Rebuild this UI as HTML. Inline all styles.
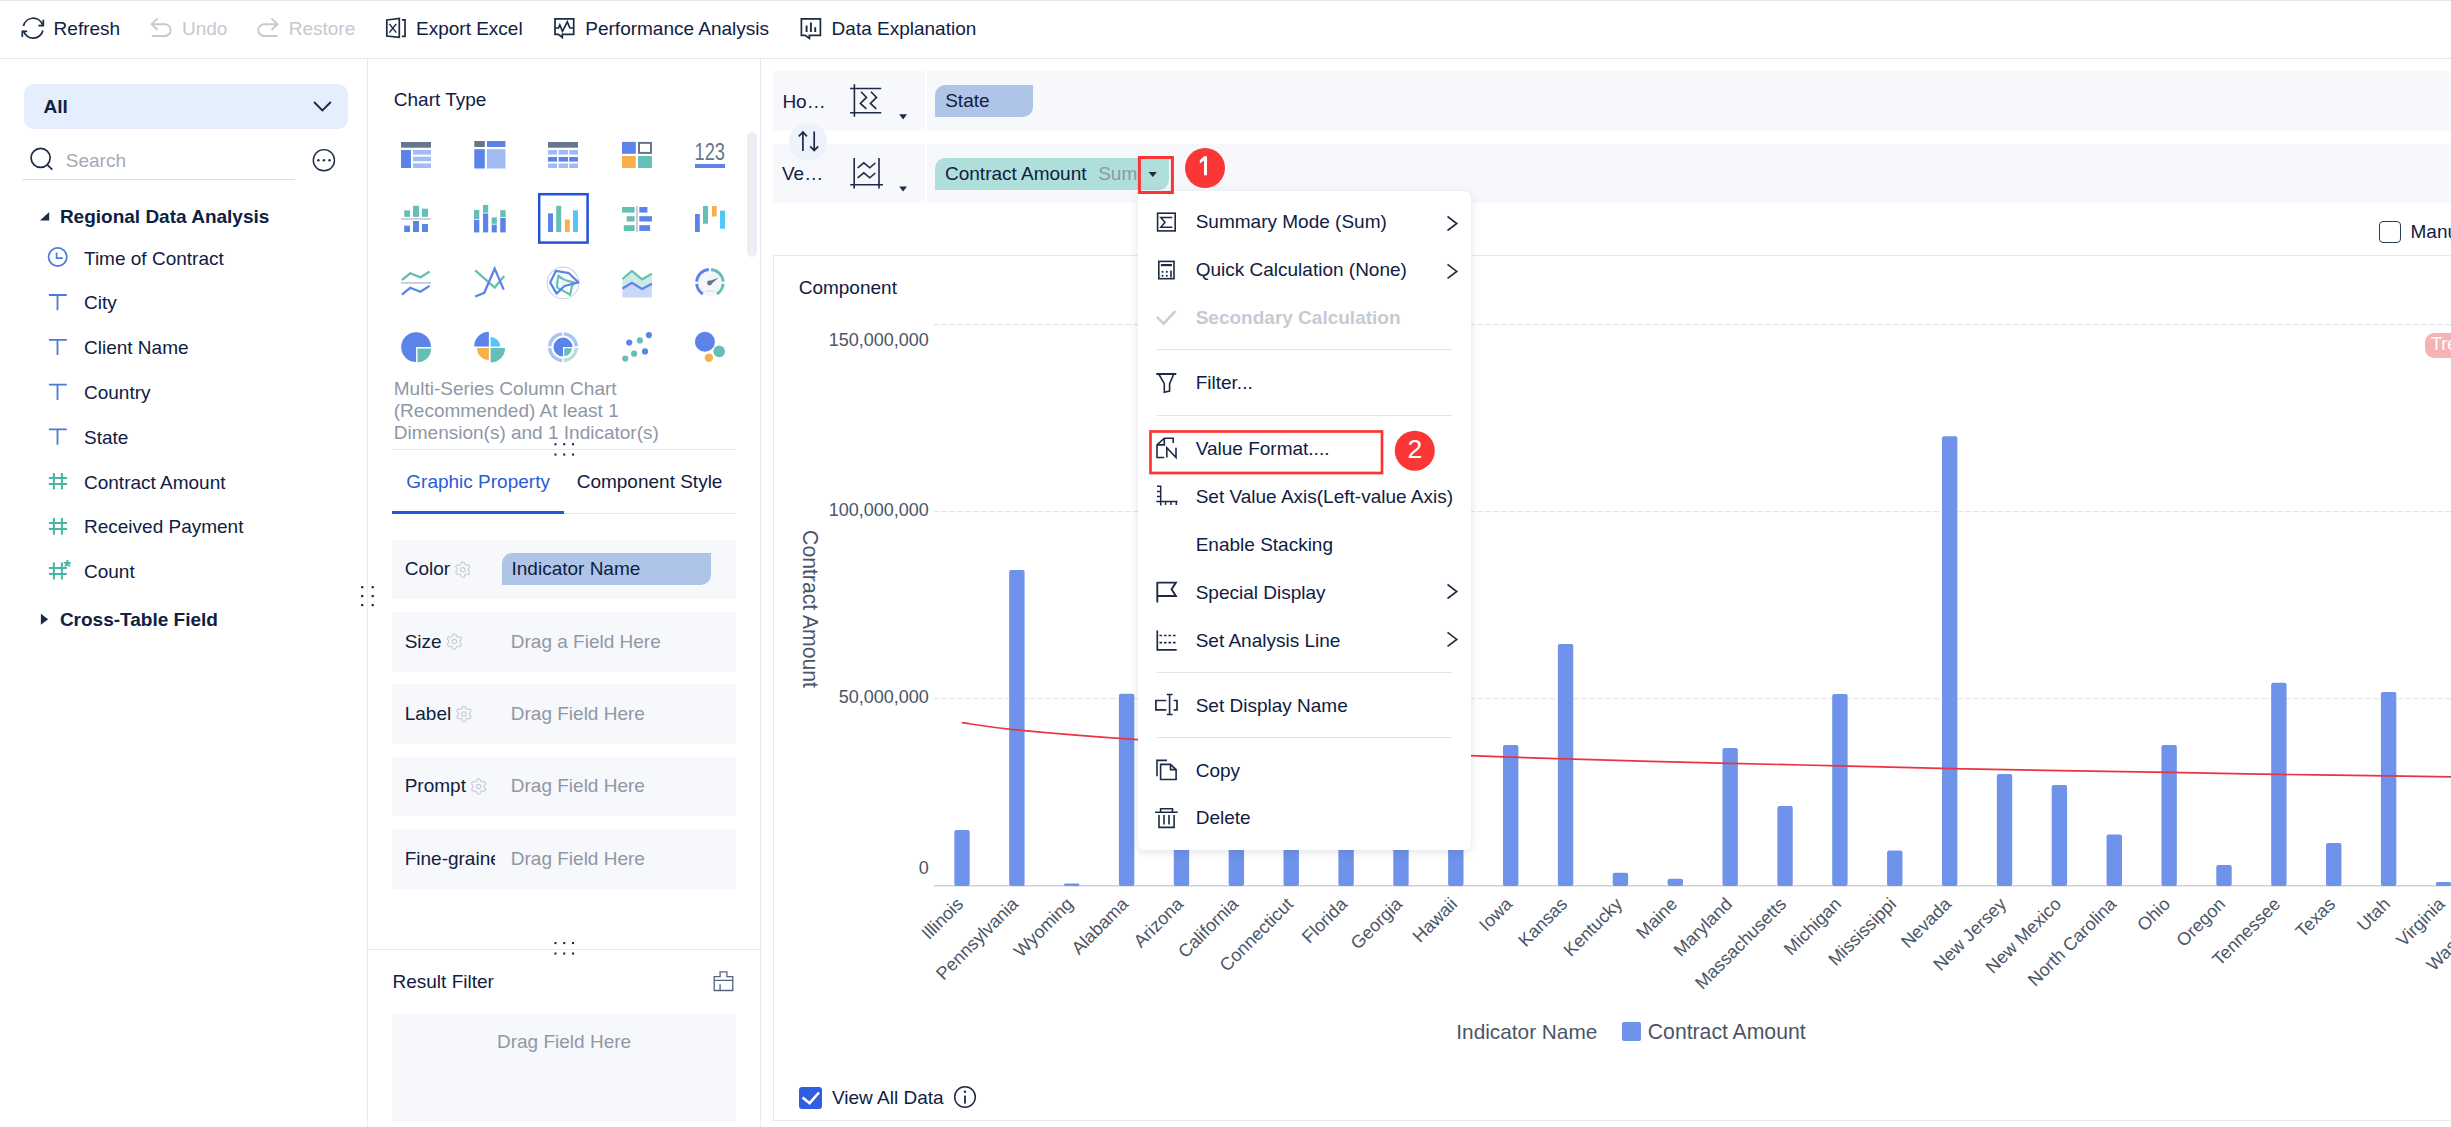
<!DOCTYPE html>
<html><head><meta charset="utf-8">
<style>
*{margin:0;padding:0;box-sizing:border-box}
html,body{width:2451px;height:1127px;overflow:hidden;background:#fff;font-family:"Liberation Sans",sans-serif;color:#0f2042}
.a{position:absolute}
.t{position:absolute;white-space:nowrap;font-size:19px;line-height:23px}
.b{font-weight:bold}
.g{color:#c3c8d1}
.gr{color:#8f97a6}
svg{position:absolute;overflow:visible}
</style></head><body>
<!-- TOOLBAR -->
<div class="a" style="left:0;top:0;width:2451px;height:1px;background:#e3e6ec"></div>
<div class="a" style="left:0;top:58px;width:2451px;height:1px;background:#e3e6ec"></div>

<div class="t" style="left:53.6px;top:17.4px">Refresh</div>
<div class="t g" style="left:182px;top:17.4px">Undo</div>
<div class="t g" style="left:288.7px;top:17.4px">Restore</div>
<div class="t" style="left:416px;top:17.4px">Export Excel</div>
<div class="t" style="left:585.3px;top:17.4px">Performance Analysis</div>
<div class="t" style="left:831.6px;top:17.4px">Data Explanation</div>

<!-- LEFT PANEL -->
<div class="a" style="left:367px;top:59px;width:1px;height:1068px;background:#e8eaef"></div>
<div class="a" style="left:24px;top:84px;width:324px;height:45px;border-radius:10px;background:#e5eefc"></div>
<div class="t b" style="left:43.5px;top:94.5px">All</div>
<div class="t gr" style="left:65.8px;top:148.5px;color:#a3aab6">Search</div>
<div class="a" style="left:22px;top:179px;width:273px;height:1px;background:#dce1e9"></div>
<div class="t b" style="left:59.9px;top:204.8px">Regional Data Analysis</div>
<div class="t" style="left:84px;top:246.5px">Time of Contract</div>
<div class="t" style="left:84px;top:291.3px">City</div>
<div class="t" style="left:84px;top:336.1px">Client Name</div>
<div class="t" style="left:84px;top:380.9px">Country</div>
<div class="t" style="left:84px;top:425.7px">State</div>
<div class="t" style="left:84px;top:470.5px">Contract Amount</div>
<div class="t" style="left:84px;top:515.3px">Received Payment</div>
<div class="t" style="left:84px;top:560.1px">Count</div>
<div class="t b" style="left:59.9px;top:607.5px">Cross-Table Field</div>

<!-- MIDDLE PANEL -->
<div class="a" style="left:760px;top:59px;width:1px;height:1068px;background:#e8eaef"></div>
<div class="t" style="left:393.8px;top:87.9px">Chart Type</div>
<div class="a" style="left:747px;top:132px;width:10px;height:125px;border-radius:5px;background:#eceef3"></div>
<div class="t gr" style="left:393.8px;top:377px">Multi-Series Column Chart</div>
<div class="t gr" style="left:393.8px;top:399px">(Recommended) At least 1</div>
<div class="t gr" style="left:393.8px;top:421px">Dimension(s) and 1 Indicator(s)</div>
<div class="a" style="left:392px;top:449px;width:344px;height:1px;background:#e3e6ec"></div>

<div class="t" style="left:406.3px;top:469.8px;color:#2a5bd7">Graphic Property</div>
<div class="t" style="left:576.7px;top:469.8px">Component Style</div>
<div class="a" style="left:392px;top:513px;width:344px;height:1px;background:#e3e6ec"></div>
<div class="a" style="left:392px;top:511px;width:172px;height:3px;background:#2257d6"></div>

<div class="a" style="left:392px;top:540px;width:344px;height:59px;background:#f7f8fb"></div>
<div class="a" style="left:392px;top:612px;width:344px;height:60px;background:#f7f8fb"></div>
<div class="a" style="left:392px;top:684px;width:344px;height:60px;background:#f7f8fb"></div>
<div class="a" style="left:392px;top:757px;width:344px;height:59px;background:#f7f8fb"></div>
<div class="a" style="left:392px;top:829px;width:344px;height:60px;background:#f7f8fb"></div>

<div class="t" style="left:404.7px;top:557.2px">Color</div>
<div class="a" style="left:502px;top:553px;width:209px;height:32px;background:#afc5e8;border-radius:10px 0 10px 0"></div>
<div class="t" style="left:511.5px;top:557.2px">Indicator Name</div>
<div class="t" style="left:404.7px;top:629.7px">Size</div>
<div class="t gr" style="left:510.8px;top:629.7px">Drag a Field Here</div>
<div class="t" style="left:404.7px;top:702px">Label</div>
<div class="t gr" style="left:510.8px;top:702px">Drag Field Here</div>
<div class="t" style="left:404.7px;top:774.3px">Prompt</div>
<div class="t gr" style="left:510.8px;top:774.3px">Drag Field Here</div>
<div class="a" style="left:404.7px;top:840px;width:90px;height:40px;overflow:hidden"><div class="t" style="left:0;top:6.6px">Fine-grained</div></div>
<div class="t gr" style="left:510.8px;top:846.6px">Drag Field Here</div>

<div class="a" style="left:368px;top:949px;width:392px;height:1px;background:#e3e6ec"></div>
<div class="t" style="left:392.5px;top:970.3px">Result Filter</div>
<div class="a" style="left:392px;top:1014px;width:344px;height:107px;background:#f7f8fb"></div>
<div class="t gr" style="left:497px;top:1030.2px">Drag Field Here</div>


<!-- RIGHT -->
<div class="a" style="left:773px;top:71px;width:1678px;height:60px;background:#f7f8fb"></div>
<div class="a" style="left:773px;top:144px;width:1678px;height:59px;background:#f7f8fb"></div>
<div class="a" style="left:924.5px;top:71px;width:2.5px;height:60px;background:#fff"></div>
<div class="a" style="left:924.5px;top:144px;width:2.5px;height:59px;background:#fff"></div>
<div class="t" style="left:782.4px;top:89.6px">Ho…</div>
<div class="t" style="left:782px;top:162.4px">Ve…</div>
<div class="a" style="left:789px;top:123px;width:38px;height:38px;border-radius:50%;background:#eef2fa"></div>
<div class="a" style="left:935px;top:85px;width:98px;height:32px;background:#afc5e8;border-radius:10px 0 10px 0"></div>
<div class="t" style="left:945.2px;top:89.2px">State</div>
<div class="a" style="left:935px;top:158px;width:234px;height:32px;background:#afdfdb;border-radius:10px 0 10px 0"></div>
<div class="t" style="left:945px;top:162.4px">Contract Amount</div>
<div class="t" style="left:1098.2px;top:162.4px;color:#8e95a8">Sum</div>
<div class="a" style="left:773px;top:255px;width:1700px;height:866px;border:1px solid #e6e8ee"></div>
<div class="t" style="left:798.7px;top:275.5px">Component</div>
<div class="a" style="left:2379px;top:221px;width:22px;height:22px;border:1.5px solid #2b3a55;border-radius:4px"></div>
<div class="t" style="left:2410.5px;top:220px">Manual</div>
<div class="a" style="left:2425px;top:333px;width:60px;height:25px;border-radius:9px;background:#f6b3b5"></div>
<div class="t" style="left:2431px;top:333px;color:#fff;font-size:18px;line-height:22px">Trend</div>
<div class="a" style="left:799px;top:1087px;width:23px;height:22px;border-radius:3px;background:#2f5fe0"></div>
<div class="t" style="left:832px;top:1086px">View All Data</div>
<svg style="left:0;top:0" width="2451" height="1127" viewBox="0 0 2451 1127"><g stroke="#e2e5ea" stroke-width="1.2" stroke-dasharray="5.5 2.5"><line x1="934" y1="324.7" x2="2451" y2="324.7"/><line x1="934" y1="511.7" x2="2451" y2="511.7"/><line x1="934" y1="698.6" x2="2451" y2="698.6"/></g><line x1="934" y1="885.8" x2="2451" y2="885.8" stroke="#cdd1d8" stroke-width="1.6"/><rect x="954.30" y="830" width="15.4" height="56.0" rx="2.0" fill="#6f92eb"/><rect x="1009.17" y="570" width="15.4" height="316.0" rx="2.0" fill="#6f92eb"/><rect x="1064.04" y="883.5" width="15.4" height="2.5" rx="1.2" fill="#6f92eb"/><rect x="1118.91" y="693.8" width="15.4" height="192.2" rx="2.0" fill="#6f92eb"/><rect x="1173.78" y="760" width="15.4" height="126.0" rx="2.0" fill="#6f92eb"/><rect x="1228.65" y="770" width="15.4" height="116.0" rx="2.0" fill="#6f92eb"/><rect x="1283.52" y="780" width="15.4" height="106.0" rx="2.0" fill="#6f92eb"/><rect x="1338.39" y="760" width="15.4" height="126.0" rx="2.0" fill="#6f92eb"/><rect x="1393.26" y="770" width="15.4" height="116.0" rx="2.0" fill="#6f92eb"/><rect x="1448.13" y="790" width="15.4" height="96.0" rx="2.0" fill="#6f92eb"/><rect x="1503.00" y="745" width="15.4" height="141.0" rx="2.0" fill="#6f92eb"/><rect x="1557.87" y="644" width="15.4" height="242.0" rx="2.0" fill="#6f92eb"/><rect x="1612.74" y="872.7" width="15.4" height="13.3" rx="2.0" fill="#6f92eb"/><rect x="1667.61" y="878.7" width="15.4" height="7.3" rx="2.0" fill="#6f92eb"/><rect x="1722.48" y="748" width="15.4" height="138.0" rx="2.0" fill="#6f92eb"/><rect x="1777.35" y="805.9" width="15.4" height="80.1" rx="2.0" fill="#6f92eb"/><rect x="1832.22" y="693.9" width="15.4" height="192.1" rx="2.0" fill="#6f92eb"/><rect x="1887.09" y="850.6" width="15.4" height="35.4" rx="2.0" fill="#6f92eb"/><rect x="1941.96" y="436.2" width="15.4" height="449.8" rx="2.0" fill="#6f92eb"/><rect x="1996.83" y="773.9" width="15.4" height="112.1" rx="2.0" fill="#6f92eb"/><rect x="2051.70" y="785" width="15.4" height="101.0" rx="2.0" fill="#6f92eb"/><rect x="2106.57" y="834.4" width="15.4" height="51.6" rx="2.0" fill="#6f92eb"/><rect x="2161.44" y="745" width="15.4" height="141.0" rx="2.0" fill="#6f92eb"/><rect x="2216.31" y="865" width="15.4" height="21.0" rx="2.0" fill="#6f92eb"/><rect x="2271.18" y="682.8" width="15.4" height="203.2" rx="2.0" fill="#6f92eb"/><rect x="2326.05" y="842.9" width="15.4" height="43.1" rx="2.0" fill="#6f92eb"/><rect x="2380.92" y="692" width="15.4" height="194.0" rx="2.0" fill="#6f92eb"/><rect x="2435.79" y="882" width="15.4" height="4.0" rx="2.0" fill="#6f92eb"/><path d="M962 722.7 C971.0 723.88 986.7 726.98 1016 729.8 C1045.3 732.62 1090.7 736.47 1138 739.6 C1185.3 742.73 1244.7 745.93 1300 748.6 C1355.3 751.27 1425.8 753.88 1470 755.6 C1514.2 757.32 1521.7 757.60 1565 758.9 C1608.3 760.20 1684.3 762.25 1730 763.4 C1775.7 764.55 1802.2 764.92 1839 765.8 C1875.8 766.68 1896.0 767.62 1951 768.7 C2006.0 769.78 2114.3 771.35 2169 772.3 C2223.7 773.25 2242.5 773.82 2279 774.4 C2315.5 774.98 2359.3 775.40 2388 775.8 C2416.7 776.20 2440.5 776.63 2451 776.8" fill="none" stroke="#ec3341" stroke-width="1.7"/></svg>
<div class="t" style="right:1522.2px;top:329.5px;font-size:18px;line-height:20px;color:#4a5567">150,000,000</div>
<div class="t" style="right:1522.2px;top:500.3px;font-size:18px;line-height:20px;color:#4a5567">100,000,000</div>
<div class="t" style="right:1522.2px;top:687.1px;font-size:18px;line-height:20px;color:#4a5567">50,000,000</div>
<div class="t" style="right:1522.2px;top:857.5px;font-size:18px;line-height:20px;color:#4a5567">0</div>
<div class="t" style="right:1490.6px;top:891.3px;font-size:18px;line-height:20px;color:#4a5567;transform-origin:100% 50%;transform:rotate(-45deg)">Illinois</div>
<div class="t" style="right:1435.7px;top:891.3px;font-size:18px;line-height:20px;color:#4a5567;transform-origin:100% 50%;transform:rotate(-45deg)">Pennsylvania</div>
<div class="t" style="right:1380.9px;top:891.3px;font-size:18px;line-height:20px;color:#4a5567;transform-origin:100% 50%;transform:rotate(-45deg)">Wyoming</div>
<div class="t" style="right:1326.0px;top:891.3px;font-size:18px;line-height:20px;color:#4a5567;transform-origin:100% 50%;transform:rotate(-45deg)">Alabama</div>
<div class="t" style="right:1271.1px;top:891.3px;font-size:18px;line-height:20px;color:#4a5567;transform-origin:100% 50%;transform:rotate(-45deg)">Arizona</div>
<div class="t" style="right:1216.2px;top:891.3px;font-size:18px;line-height:20px;color:#4a5567;transform-origin:100% 50%;transform:rotate(-45deg)">California</div>
<div class="t" style="right:1161.4px;top:891.3px;font-size:18px;line-height:20px;color:#4a5567;transform-origin:100% 50%;transform:rotate(-45deg)">Connecticut</div>
<div class="t" style="right:1106.5px;top:891.3px;font-size:18px;line-height:20px;color:#4a5567;transform-origin:100% 50%;transform:rotate(-45deg)">Florida</div>
<div class="t" style="right:1051.6px;top:891.3px;font-size:18px;line-height:20px;color:#4a5567;transform-origin:100% 50%;transform:rotate(-45deg)">Georgia</div>
<div class="t" style="right:996.8px;top:891.3px;font-size:18px;line-height:20px;color:#4a5567;transform-origin:100% 50%;transform:rotate(-45deg)">Hawaii</div>
<div class="t" style="right:941.9px;top:891.3px;font-size:18px;line-height:20px;color:#4a5567;transform-origin:100% 50%;transform:rotate(-45deg)">Iowa</div>
<div class="t" style="right:887.0px;top:891.3px;font-size:18px;line-height:20px;color:#4a5567;transform-origin:100% 50%;transform:rotate(-45deg)">Kansas</div>
<div class="t" style="right:832.2px;top:891.3px;font-size:18px;line-height:20px;color:#4a5567;transform-origin:100% 50%;transform:rotate(-45deg)">Kentucky</div>
<div class="t" style="right:777.3px;top:891.3px;font-size:18px;line-height:20px;color:#4a5567;transform-origin:100% 50%;transform:rotate(-45deg)">Maine</div>
<div class="t" style="right:722.4px;top:891.3px;font-size:18px;line-height:20px;color:#4a5567;transform-origin:100% 50%;transform:rotate(-45deg)">Maryland</div>
<div class="t" style="right:667.5px;top:891.3px;font-size:18px;line-height:20px;color:#4a5567;transform-origin:100% 50%;transform:rotate(-45deg)">Massachusetts</div>
<div class="t" style="right:612.7px;top:891.3px;font-size:18px;line-height:20px;color:#4a5567;transform-origin:100% 50%;transform:rotate(-45deg)">Michigan</div>
<div class="t" style="right:557.8px;top:891.3px;font-size:18px;line-height:20px;color:#4a5567;transform-origin:100% 50%;transform:rotate(-45deg)">Mississippi</div>
<div class="t" style="right:502.9px;top:891.3px;font-size:18px;line-height:20px;color:#4a5567;transform-origin:100% 50%;transform:rotate(-45deg)">Nevada</div>
<div class="t" style="right:448.1px;top:891.3px;font-size:18px;line-height:20px;color:#4a5567;transform-origin:100% 50%;transform:rotate(-45deg)">New Jersey</div>
<div class="t" style="right:393.2px;top:891.3px;font-size:18px;line-height:20px;color:#4a5567;transform-origin:100% 50%;transform:rotate(-45deg)">New Mexico</div>
<div class="t" style="right:338.3px;top:891.3px;font-size:18px;line-height:20px;color:#4a5567;transform-origin:100% 50%;transform:rotate(-45deg)">North Carolina</div>
<div class="t" style="right:283.5px;top:891.3px;font-size:18px;line-height:20px;color:#4a5567;transform-origin:100% 50%;transform:rotate(-45deg)">Ohio</div>
<div class="t" style="right:228.6px;top:891.3px;font-size:18px;line-height:20px;color:#4a5567;transform-origin:100% 50%;transform:rotate(-45deg)">Oregon</div>
<div class="t" style="right:173.7px;top:891.3px;font-size:18px;line-height:20px;color:#4a5567;transform-origin:100% 50%;transform:rotate(-45deg)">Tennessee</div>
<div class="t" style="right:118.8px;top:891.3px;font-size:18px;line-height:20px;color:#4a5567;transform-origin:100% 50%;transform:rotate(-45deg)">Texas</div>
<div class="t" style="right:64.0px;top:891.3px;font-size:18px;line-height:20px;color:#4a5567;transform-origin:100% 50%;transform:rotate(-45deg)">Utah</div>
<div class="t" style="right:9.1px;top:891.3px;font-size:18px;line-height:20px;color:#4a5567;transform-origin:100% 50%;transform:rotate(-45deg)">Virginia</div>
<div class="t" style="right:-45.8px;top:891.3px;font-size:18px;line-height:20px;color:#4a5567;transform-origin:100% 50%;transform:rotate(-45deg)">Washington</div>
<div class="t" style="left:1456.3px;top:1020.9px;font-size:20.8px;line-height:22px;color:#4a5567">Indicator Name</div>
<div class="a" style="left:1622px;top:1022px;width:19px;height:19.4px;border-radius:2px;background:#6f92eb"></div>
<div class="t" style="left:1647.8px;top:1020.9px;font-size:21.2px;line-height:22px;color:#4a5567">Contract Amount</div>
<div class="t" style="left:810.4px;top:609px;font-size:21.2px;line-height:22px;color:#4a5567;transform:translate(-50%,-50%) rotate(90deg)">Contract Amount</div>

<svg style="left:0;top:0" width="2451" height="1127" viewBox="0 0 2451 1127">
<g fill="none" stroke="#1c2a46" stroke-width="1.7" stroke-linecap="butt" stroke-linejoin="miter">
 <!-- refresh -->
 <path d="M23.46 25.95 A10 10 0 0 1 42.62 24.85"/>
 <path d="M43.3 19.7 V25.6 H38.4"/>
 <path d="M42.92 30.53 A10 10 0 0 1 23.51 30.69"/>
 <path d="M27.2 31.3 H22.3 V36.9"/>
 <!-- export -->
 <path d="M386.8 20 L399.3 18.4 V37.3 L386.8 36.1 Z"/>
 <path d="M389.3 23.9 L396.3 32.6 M396.3 23.9 L389.3 32.6" stroke-width="1.5"/>
 <path d="M401.9 19.8 H405 V36.3 H401.9"/>
 <!-- perf -->
 <path d="M555 18.8 H573.7 V34.4 H562.3 V37.4 L558.4 34.4 H555 Z"/>
 <path d="M555 28 H558.5 L559.8 24.9 L562.5 31.3 L567.3 21.8 L569.9 28 H573.7"/>
 <!-- data expl -->
 <path d="M801.4 18.8 H820.4 V35.3 H809.4 V38.3 L805.1 35.3 H801.4 Z"/>
 <path d="M806.6 25.5 V31.9 M810.9 22.4 V31.9 M815.2 27.2 V31.9" stroke-width="1.9"/>
 <!-- search -->
 <circle cx="40.6" cy="157.9" r="9.5"/>
 <path d="M47.3 164.8 L52.3 169.6"/>
 <!-- chevron -->
 <path d="M314 102 L322.4 110.4 L330.8 102" stroke-width="1.9"/>
 <!-- more -->
 <circle cx="323.9" cy="160.2" r="10.6" stroke-width="1.4"/>
</g>
<g fill="none" stroke="#c3c8d1" stroke-width="1.85">
 <path d="M157.5 18.4 L151.6 24.2 L157.5 30"/>
 <path d="M151.6 24.2 H164.8 A5.9 5.9 0 0 1 164.8 36 H151.8"/>
 <path d="M271.5 18.4 L277.4 24.2 L271.5 30"/>
 <path d="M277.4 24.2 H264.2 A5.9 5.9 0 0 0 264.2 36 H277.2"/>
</g>
<g fill="#1c2a46">
 <circle cx="318.4" cy="160.2" r="1.2"/><circle cx="323.9" cy="160.2" r="1.2"/><circle cx="329.5" cy="160.2" r="1.2"/>
 <path d="M49.2 212 V220.4 H40 Z"/>
 <path d="M40.9 613.8 V624.7 L48.1 619.3 Z"/>
 <rect x="361.1" y="586.1" width="2.2" height="2.2"/><rect x="371.6" y="586.1" width="2.2" height="2.2"/>
 <rect x="361.1" y="595" width="2.2" height="2.2"/><rect x="371.6" y="595" width="2.2" height="2.2"/>
 <rect x="361.1" y="604" width="2.2" height="2.2"/><rect x="371.6" y="604" width="2.2" height="2.2"/>
</g>
<g fill="none" stroke="#4a7bd8" stroke-width="1.7">
 <circle cx="57.7" cy="257" r="9.1"/>
 <path d="M56.6 252.4 V258.2 H62.8"/>
 <path d="M48.9 295 H66.8 M57.5 295 V310.3 M48.9 339.8 H66.8 M57.5 339.8 V355.1 M48.9 384.6 H66.8 M57.5 384.6 V399.9 M48.9 429.4 H66.8 M57.5 429.4 V444.7" stroke-width="1.8"/>
</g>
<g fill="none" stroke="#45b5a5" stroke-width="2">
 <path d="M53.9 473 V489.6 M61.9 473 V489.6 M48.9 478 H67 M48.9 484.1 H67"/>
 <path d="M53.9 518 V534.7 M61.9 518 V534.7 M48.9 523 H67 M48.9 529 H67"/>
 <path d="M53.9 562.6 V579.5 M61.9 562.6 V579.5 M48.9 568 H66.8 M48.9 574 H66.8"/>
</g>
<text x="63.6" y="572.6" font-family="Liberation Sans" font-size="19" font-weight="bold" fill="#45b5a5">*</text>
</svg>
<svg style="left:0;top:0" width="2451" height="1127" viewBox="0 0 2451 1127"><rect x="401.0" y="142.0" width="30.0" height="5.7" fill="#67768c"/><rect x="401.0" y="150.0" width="10.0" height="18.0" fill="#5b83e8"/><rect x="413.0" y="150.0" width="18.0" height="4.6" fill="#a1bcf2"/><rect x="413.0" y="156.7" width="18.0" height="4.5" fill="#a1bcf2"/><rect x="413.0" y="163.4" width="18.0" height="4.6" fill="#a1bcf2"/><rect x="474.3" y="141.0" width="10.5" height="6.0" fill="#67768c"/><rect x="487.0" y="141.0" width="18.4" height="6.0" fill="#5b83e8"/><rect x="474.3" y="149.2" width="10.5" height="19.3" fill="#5b83e8"/><rect x="487.0" y="149.2" width="18.4" height="19.3" fill="#a1bcf2"/><rect x="548.0" y="142.0" width="30.0" height="5.7" fill="#67768c"/><rect x="548.0" y="150.0" width="9.0" height="4.6" fill="#a1bcf2"/><rect x="558.6" y="150.0" width="9.4" height="4.6" fill="#a1bcf2"/><rect x="569.2" y="150.0" width="8.8" height="4.6" fill="#a1bcf2"/><rect x="548.0" y="157.0" width="9.0" height="4.6" fill="#5b83e8"/><rect x="558.6" y="157.0" width="9.4" height="4.6" fill="#5b83e8"/><rect x="569.2" y="157.0" width="8.8" height="4.6" fill="#5b83e8"/><rect x="548.0" y="163.5" width="9.0" height="4.5" fill="#a1bcf2"/><rect x="558.6" y="163.5" width="9.4" height="4.5" fill="#a1bcf2"/><rect x="569.2" y="163.5" width="8.8" height="4.5" fill="#a1bcf2"/><rect x="622.0" y="141.9" width="13.8" height="11.9" fill="#5b83e8"/><rect x="639" y="142.9" width="12" height="10" fill="none" stroke="#67768c" stroke-width="2"/><rect x="622.0" y="156.0" width="13.8" height="12.0" fill="#f9b04c"/><rect x="638.0" y="156.0" width="13.9" height="12.0" fill="#65bfb4"/><text x="694.5" y="159.6" font-family="Liberation Sans" font-size="24" fill="#67768c" textLength="30.5" lengthAdjust="spacingAndGlyphs">123</text><rect x="695.0" y="164.0" width="30.0" height="4.0" fill="#5b83e8"/><rect x="404.2" y="210.4" width="5.8" height="6.4" fill="#65bfb4"/><rect x="404.2" y="225.7" width="5.8" height="6.3" fill="#5b83e8"/><rect x="413.0" y="205.8" width="6.0" height="11.0" fill="#65bfb4"/><rect x="413.0" y="221.0" width="6.0" height="11.0" fill="#5b83e8"/><rect x="422.0" y="208.7" width="6.0" height="8.1" fill="#65bfb4"/><rect x="422.0" y="224.0" width="6.0" height="8.0" fill="#5b83e8"/><rect x="401.0" y="218.2" width="30.0" height="1.7" fill="#c5cad6"/><rect x="474.0" y="209.9" width="5.3" height="9.1" fill="#65bfb4"/><rect x="474.0" y="219.8" width="5.3" height="12.6" fill="#5b83e8"/><rect x="483.0" y="204.9" width="5.2" height="7.8" fill="#65bfb4"/><rect x="483.0" y="213.5" width="5.2" height="18.9" fill="#5b83e8"/><rect x="491.7" y="217.4" width="5.1" height="6.4" fill="#65bfb4"/><rect x="491.7" y="224.6" width="5.1" height="7.8" fill="#5b83e8"/><rect x="500.2" y="210.2" width="5.5" height="7.0" fill="#65bfb4"/><rect x="500.2" y="218.0" width="5.5" height="14.4" fill="#5b83e8"/><rect x="539.2" y="194.2" width="48.4" height="48.4" fill="none" stroke="#2254d8" stroke-width="2.5"/><rect x="548.0" y="213.4" width="5.0" height="18.6" fill="#5b83e8"/><rect x="556.2" y="205.8" width="5.0" height="26.2" fill="#65bfb4"/><rect x="565.0" y="219.6" width="4.8" height="12.4" fill="#f9b04c"/><rect x="573.0" y="210.4" width="5.0" height="21.6" fill="#52c7f5"/><rect x="636.0" y="206.0" width="1.9" height="26.0" fill="#c5cad6"/><rect x="622.0" y="207.0" width="12.6" height="5.6" fill="#65bfb4"/><rect x="626.6" y="216.2" width="8.0" height="5.3" fill="#65bfb4"/><rect x="623.8" y="225.2" width="10.8" height="5.8" fill="#65bfb4"/><rect x="639.3" y="207.0" width="8.1" height="5.6" fill="#5b83e8"/><rect x="639.3" y="216.2" width="12.6" height="5.3" fill="#5b83e8"/><rect x="639.3" y="225.2" width="10.8" height="5.8" fill="#5b83e8"/><rect x="695.0" y="214.0" width="4.8" height="18.0" fill="#5b83e8"/><rect x="703.0" y="206.0" width="5.0" height="17.7" fill="#65bfb4"/><rect x="712.0" y="206.0" width="4.7" height="10.5" fill="#f9b04c"/><rect x="720.0" y="210.6" width="5.0" height="18.1" fill="#52c7f5"/><polyline points="401.9,280 410.2,273.3 420.4,277.4 429.6,271.5" fill="none" stroke="#65bfb4" stroke-width="2.3"/><rect x="401.0" y="282.0" width="30.0" height="1.8" fill="#c5cad6"/><polyline points="401.9,294.6 410.2,287.8 420.4,291.7 429.6,285.9" fill="none" stroke="#5b83e8" stroke-width="2.3"/><polyline points="475.2,270.4 494.7,287.5 504.2,276.1" fill="none" stroke="#65bfb4" stroke-width="2.3"/><polyline points="475.2,296.5 484.3,292.8 494.7,268.6 503.7,289.6" fill="none" stroke="#5b83e8" stroke-width="2.3"/><circle cx="563" cy="282.9" r="15.8" fill="#fff" stroke="#d3d8e0" stroke-width="1.2"/><path d="M549 282.6 H577 M556 271 L570 295 M570 271 L556 295" stroke="#e6e9ee" stroke-width="0.8"/><path d="M558.4 275.6 Q562 279 564.8 280 L574.4 282.6 L572 285.6 L570.2 294.8 L562.4 290.4 L557.2 287.6 L557.2 282.4 Z" fill="none" stroke="#65bfb4" stroke-width="2.2" stroke-linejoin="round"/><polygon points="556,270.8 568.8,273.2 578.4,282.4 564.4,286 556.6,293.6 550.2,282.6" fill="none" stroke="#5b83e8" stroke-width="2.2" stroke-linejoin="round"/><polygon points="622.4,279 631.9,271 642.1,279.3 651.9,273.6 651.9,284 642.1,289 631.9,283 622.4,288.6" fill="#cdeae6"/><polygon points="622.4,288.5 631.9,282.9 642.1,288.9 651.9,283.8 651.9,297.6 622.4,297.6" fill="#cad8f7"/><polyline points="622.4,279 631.9,271 642.1,279.3 651.9,273.6" fill="none" stroke="#65bfb4" stroke-width="2.2"/><polyline points="622.4,288.5 631.9,282.9 642.1,288.9 651.9,283.8" fill="none" stroke="#5b83e8" stroke-width="2.2"/><circle cx="709.9" cy="282.7" r="14" fill="#f5f6f9"/><path d="M696.65 281.54 A13.3 13.3 0 0 1 708.74 269.45" fill="none" stroke="#5b83e8" stroke-width="2.9"/><path d="M711.06 269.45 A13.3 13.3 0 0 1 723.15 281.54" fill="none" stroke="#65bfb4" stroke-width="2.9"/><path d="M723.15 283.86 A13.3 13.3 0 0 1 716.95 293.98" fill="none" stroke="#65bfb4" stroke-width="2.9"/><path d="M696.65 283.86 A13.3 13.3 0 0 0 702.85 293.98" fill="none" stroke="#5b83e8" stroke-width="2.9"/><circle cx="709.5" cy="283" r="2.4" fill="#67768c"/><path d="M708 281.5 L718.6 277.8 L710.5 284.8Z" fill="#67768c"/><rect x="705.5" y="290.5" width="9.0" height="1.5" fill="#dfe2e8"/><path d="M416.1 347.1 H431 A14.9 14.9 0 1 0 416.1 362 Z" fill="#5b83e8"/><path d="M417.5 348.5 H431.2 A13.8 13.8 0 0 1 417.5 362.3 Z" fill="#65bfb4"/><path d="M488.9 346.4 H474.2 A14.7 14.7 0 0 1 488.9 331.7 Z" fill="#5b83e8"/><path d="M490.6 346.4 V337 A9.8 9.8 0 0 1 500.2 346.4 Z" fill="#52c7f5"/><path d="M488.9 348.1 V360.2 A12 12 0 0 1 477 348.1 Z" fill="#f9b04c"/><path d="M490.6 348.1 H505.1 A14.5 14.5 0 0 1 490.6 362.6 Z" fill="#65bfb4"/><path d="M562.2 333.9 A13.4 13.4 0 0 0 549.6 346.3" fill="none" stroke="#adc3f3" stroke-width="3.4"/><path d="M563.8 333.9 A13.4 13.4 0 0 1 576.4 346.3" fill="none" stroke="#adc3f3" stroke-width="3.4"/><path d="M549.6 348 A13.4 13.4 0 0 0 562.2 360.5" fill="none" stroke="#adc3f3" stroke-width="3.4"/><path d="M576.4 348 A13.4 13.4 0 0 1 563.8 360.5" fill="none" stroke="#b3e0da" stroke-width="3.4"/><path d="M563 347.1 H572.5 A9.5 9.5 0 1 0 563 356.6 Z" fill="#5b83e8"/><path d="M564.2 348.3 H572 A8.2 8.2 0 0 1 564.2 356 Z" fill="#65bfb4"/><circle cx="625.3" cy="358.5" r="3.1" fill="#65bfb4"/><circle cx="634.1" cy="353.7" r="3.1" fill="#65bfb4"/><circle cx="645" cy="351.4" r="3.1" fill="#5b83e8"/><circle cx="629.2" cy="342.5" r="3.1" fill="#5b83e8"/><circle cx="639.9" cy="340.4" r="3.1" fill="#65bfb4"/><circle cx="648.9" cy="335.1" r="3.1" fill="#5b83e8"/><circle cx="704.9" cy="341.8" r="10" fill="#5b83e8"/><circle cx="719.2" cy="351.4" r="5.8" fill="#65bfb4"/><circle cx="708.9" cy="357.8" r="4.2" fill="#f9b04c"/></svg>
<svg style="left:0;top:0" width="2451" height="1127" viewBox="0 0 2451 1127"><polygon points="468.40,569.70 468.38,569.21 468.51,568.69 469.18,567.99 469.75,567.17 469.69,566.49 469.38,565.90 469.03,565.34 468.47,564.94 467.47,565.03 466.53,565.26 466.01,565.11 465.60,564.85 465.17,564.62 464.78,564.25 464.51,563.32 464.08,562.41 463.46,562.13 462.80,562.10 462.14,562.13 461.52,562.41 461.09,563.32 460.82,564.25 460.43,564.62 460.00,564.85 459.59,565.11 459.07,565.26 458.13,565.03 457.13,564.94 456.57,565.34 456.22,565.90 455.91,566.49 455.85,567.17 456.42,567.99 457.09,568.69 457.22,569.21 457.20,569.70 457.22,570.19 457.09,570.71 456.42,571.41 455.85,572.23 455.91,572.91 456.22,573.50 456.57,574.06 457.13,574.46 458.13,574.37 459.07,574.14 459.59,574.29 460.00,574.55 460.43,574.78 460.82,575.15 461.09,576.08 461.52,576.99 462.14,577.27 462.80,577.30 463.46,577.27 464.08,576.99 464.51,576.08 464.78,575.15 465.17,574.78 465.60,574.55 466.01,574.29 466.53,574.14 467.47,574.37 468.47,574.46 469.03,574.06 469.38,573.50 469.69,572.91 469.75,572.23 469.18,571.41 468.51,570.71 468.38,570.19" fill="none" stroke="#c5cad4" stroke-width="1.1"/><circle cx="462.8" cy="569.7" r="2.2" fill="none" stroke="#c5cad4" stroke-width="1.1"/><polygon points="460.00,641.60 459.98,641.11 460.11,640.59 460.78,639.89 461.35,639.07 461.29,638.39 460.98,637.80 460.63,637.24 460.07,636.84 459.07,636.93 458.13,637.16 457.61,637.01 457.20,636.75 456.77,636.52 456.38,636.15 456.11,635.22 455.68,634.31 455.06,634.03 454.40,634.00 453.74,634.03 453.12,634.31 452.69,635.22 452.42,636.15 452.03,636.52 451.60,636.75 451.19,637.01 450.67,637.16 449.73,636.93 448.73,636.84 448.17,637.24 447.82,637.80 447.51,638.39 447.45,639.07 448.02,639.89 448.69,640.59 448.82,641.11 448.80,641.60 448.82,642.09 448.69,642.61 448.02,643.31 447.45,644.13 447.51,644.81 447.82,645.40 448.17,645.96 448.73,646.36 449.73,646.27 450.67,646.04 451.19,646.19 451.60,646.45 452.03,646.68 452.42,647.05 452.69,647.98 453.12,648.89 453.74,649.17 454.40,649.20 455.06,649.17 455.68,648.89 456.11,647.98 456.38,647.05 456.77,646.68 457.20,646.45 457.61,646.19 458.13,646.04 459.07,646.27 460.07,646.36 460.63,645.96 460.98,645.40 461.29,644.81 461.35,644.13 460.78,643.31 460.11,642.61 459.98,642.09" fill="none" stroke="#c5cad4" stroke-width="1.1"/><circle cx="454.4" cy="641.6" r="2.2" fill="none" stroke="#c5cad4" stroke-width="1.1"/><polygon points="469.50,713.90 469.48,713.41 469.61,712.89 470.28,712.19 470.85,711.37 470.79,710.69 470.48,710.10 470.13,709.54 469.57,709.14 468.57,709.23 467.63,709.46 467.11,709.31 466.70,709.05 466.27,708.82 465.88,708.45 465.61,707.52 465.18,706.61 464.56,706.33 463.90,706.30 463.24,706.33 462.62,706.61 462.19,707.52 461.92,708.45 461.53,708.82 461.10,709.05 460.69,709.31 460.17,709.46 459.23,709.23 458.23,709.14 457.67,709.54 457.32,710.10 457.01,710.69 456.95,711.37 457.52,712.19 458.19,712.89 458.32,713.41 458.30,713.90 458.32,714.39 458.19,714.91 457.52,715.61 456.95,716.43 457.01,717.11 457.32,717.70 457.67,718.26 458.23,718.66 459.23,718.57 460.17,718.34 460.69,718.49 461.10,718.75 461.53,718.98 461.92,719.35 462.19,720.28 462.62,721.19 463.24,721.47 463.90,721.50 464.56,721.47 465.18,721.19 465.61,720.28 465.88,719.35 466.27,718.98 466.70,718.75 467.11,718.49 467.63,718.34 468.57,718.57 469.57,718.66 470.13,718.26 470.48,717.70 470.79,717.11 470.85,716.43 470.28,715.61 469.61,714.91 469.48,714.39" fill="none" stroke="#c5cad4" stroke-width="1.1"/><circle cx="463.9" cy="713.9" r="2.2" fill="none" stroke="#c5cad4" stroke-width="1.1"/><polygon points="484.20,786.40 484.18,785.91 484.31,785.39 484.98,784.69 485.55,783.87 485.49,783.19 485.18,782.60 484.83,782.04 484.27,781.64 483.27,781.73 482.33,781.96 481.81,781.81 481.40,781.55 480.97,781.32 480.58,780.95 480.31,780.02 479.88,779.11 479.26,778.83 478.60,778.80 477.94,778.83 477.32,779.11 476.89,780.02 476.62,780.95 476.23,781.32 475.80,781.55 475.39,781.81 474.87,781.96 473.93,781.73 472.93,781.64 472.37,782.04 472.02,782.60 471.71,783.19 471.65,783.87 472.22,784.69 472.89,785.39 473.02,785.91 473.00,786.40 473.02,786.89 472.89,787.41 472.22,788.11 471.65,788.93 471.71,789.61 472.02,790.20 472.37,790.76 472.93,791.16 473.93,791.07 474.87,790.84 475.39,790.99 475.80,791.25 476.23,791.48 476.62,791.85 476.89,792.78 477.32,793.69 477.94,793.97 478.60,794.00 479.26,793.97 479.88,793.69 480.31,792.78 480.58,791.85 480.97,791.48 481.40,791.25 481.81,790.99 482.33,790.84 483.27,791.07 484.27,791.16 484.83,790.76 485.18,790.20 485.49,789.61 485.55,788.93 484.98,788.11 484.31,787.41 484.18,786.89" fill="none" stroke="#c5cad4" stroke-width="1.1"/><circle cx="478.6" cy="786.4" r="2.2" fill="none" stroke="#c5cad4" stroke-width="1.1"/><rect x="554.4" y="443.2" width="2.1" height="2.1" fill="#1c2a46"/><rect x="554.4" y="453.5" width="2.1" height="2.1" fill="#1c2a46"/><rect x="563.2" y="443.2" width="2.1" height="2.1" fill="#1c2a46"/><rect x="563.2" y="453.5" width="2.1" height="2.1" fill="#1c2a46"/><rect x="572.0" y="443.2" width="2.1" height="2.1" fill="#1c2a46"/><rect x="572.0" y="453.5" width="2.1" height="2.1" fill="#1c2a46"/><rect x="554.4" y="942.0" width="2.1" height="2.1" fill="#1c2a46"/><rect x="554.4" y="952.5" width="2.1" height="2.1" fill="#1c2a46"/><rect x="563.2" y="942.0" width="2.1" height="2.1" fill="#1c2a46"/><rect x="563.2" y="952.5" width="2.1" height="2.1" fill="#1c2a46"/><rect x="572.0" y="942.0" width="2.1" height="2.1" fill="#1c2a46"/><rect x="572.0" y="952.5" width="2.1" height="2.1" fill="#1c2a46"/><path d="M714.2 990.5 V976.6 H720.1 V971.8 H726.9 V976.6 H732.8 V990.5 Z M714.2 980.4 H732.8 M720.1 984.3 V990.5" fill="none" stroke="#54647f" stroke-width="1.3"/></svg>
<svg style="left:0;top:0" width="2451" height="1127" viewBox="0 0 2451 1127"><g fill="none" stroke="#1c2a46" stroke-width="1.6"><path d="M854.4 84.3 V116.7 M850.1 88.5 H881.2 M850.1 112.8 H881.2"/><path d="M861 91.7 L866.5 97.4 L860.4 103.4 L866.3 108.9 M871 91.7 L876.5 97.4 L870.4 103.4 L876.3 108.9"/><path d="M854.2 158 V188.6 M879 158 V188.6 M850.2 184.8 H883"/><path d="M857.7 167.8 L863.8 162.9 L869.8 167.8 L875.3 163 M857.7 177.8 L863.8 172.9 L869.8 177.8 L875.3 173"/><path d="M802.9 132 V151.1 M798.8 136.3 L802.9 132 L806.9 136.3 M814.2 131.5 V150.6 M810.2 146.3 L814.2 150.6 L818.2 146.3" stroke-width="1.7"/></g><g fill="#1c2a46"><path d="M899.2 114.2 H907 L903.1 119.4 Z"/><path d="M899.2 186.4 H907 L903.1 191.6 Z"/></g></svg>
<!-- MENU -->
<div class="a" style="left:1138px;top:190.6px;width:333px;height:659.6px;background:#fff;border-radius:7px;box-shadow:0 2px 10px rgba(30,40,70,0.13)"></div>
<div class="t" style="left:1195.7px;top:210.3px">Summary Mode (Sum)</div>
<div class="t" style="left:1195.7px;top:258.2px">Quick Calculation (None)</div>
<div class="t b" style="left:1195.7px;top:306.1px;color:#c5cad3">Secondary Calculation</div>
<div class="t" style="left:1195.7px;top:371.4px">Filter...</div>
<div class="t" style="left:1195.7px;top:436.6px">Value Format....</div>
<div class="t" style="left:1195.7px;top:485.3px">Set Value Axis(Left-value Axis)</div>
<div class="t" style="left:1195.7px;top:533.0px">Enable Stacking</div>
<div class="t" style="left:1195.7px;top:581.2px">Special Display</div>
<div class="t" style="left:1195.7px;top:628.9px">Set Analysis Line</div>
<div class="t" style="left:1195.7px;top:693.7px">Set Display Name</div>
<div class="t" style="left:1195.7px;top:758.7px">Copy</div>
<div class="t" style="left:1195.7px;top:806.1px">Delete</div>
<div class="a" style="left:1157px;top:349.3px;width:295px;height:1px;background:#dfe2e8"></div>
<div class="a" style="left:1157px;top:415.1px;width:295px;height:1px;background:#dfe2e8"></div>
<div class="a" style="left:1157px;top:671.8px;width:295px;height:1px;background:#dfe2e8"></div>
<div class="a" style="left:1157px;top:736.7px;width:295px;height:1px;background:#dfe2e8"></div>
<svg style="left:0;top:0" width="2451" height="1127" viewBox="0 0 2451 1127"><g fill="none" stroke="#1c2a46" stroke-width="1.6"><rect x="1157.6" y="213.2" width="17.6" height="17.7"/><path d="M1172.3 217.6 H1160.8 L1165 222.3 L1160.8 227.2 H1172.3" stroke-width="1.5"/><rect x="1158.8" y="261.4" width="15.2" height="17.3"/><path d="M1171 270.5 V277.5" stroke-width="1.6"/><path d="M1156.3 374 H1176.3" stroke-width="2"/><path d="M1159 374.5 L1164.3 383.6 V392.3 L1169.6 391 V383.6 L1173.6 374.5"/><path d="M1164.3 457.5 H1157 V444.9 L1164.3 438.2 H1173.2 V442.9 M1157 444.9 H1164.3 V438.2"/><path d="M1166.8 457.5 V447.8 L1176 457.5 V447.8"/><path d="M1160.7 485.5 V505.5 M1156.3 501.5 H1177.6 M1157 486.3 H1160.7 M1157 491.6 H1160.7 M1157 496.6 H1160.7 M1165.6 501.5 V505 M1171 501.5 V505 M1176.3 501.5 V505" stroke-width="1.5"/><path d="M1157.3 582 V602.5" stroke-width="1.9"/><path d="M1157.3 582.6 H1175.9 L1171.6 589.3 L1175.9 596 H1157.3" stroke-width="1.9"/><path d="M1157.3 630.6 V649.9 H1176.7" stroke-width="1.7"/><path d="M1159.5 635.5 H1176.7 M1159.5 642.6 H1176.7" stroke-width="1.6" stroke-dasharray="2.6 1.9"/><path d="M1166.3 700.5 H1155.9 V709.8 H1166.3 M1173.6 700.5 H1177 V709.8 H1173.6" stroke-width="1.7"/><path d="M1169.6 694.5 V714.5 M1166.8 694.5 H1172.6 M1166.8 714.5 H1172.6" stroke-width="1.6"/><path d="M1157 776.3 V760.4 H1167"/><path d="M1160.6 764.4 H1170.5 L1176.1 769.6 V779.5 H1160.6 Z M1170.5 764.4 V769.6 H1176.1"/><path d="M1155 812.3 H1177.7 M1160.6 812.3 V808.7 H1172.5 V812.3 M1159 815 V827.4 H1174.1 V815 M1164 815 V824.6 M1169 815 V824.6"/><path d="M1447.5 216.5 L1456.8 223.5 L1447.5 230.5" stroke-width="1.6"/><path d="M1447.5 264.4 L1456.8 271.4 L1447.5 278.4" stroke-width="1.6"/><path d="M1447.5 584.5 L1456.8 591.5 L1447.5 598.5" stroke-width="1.6"/><path d="M1447.5 632.4 L1456.8 639.4 L1447.5 646.4" stroke-width="1.6"/></g><g fill="#1c2a46"><rect x="1161.6" y="270.90000000000003" width="1.8" height="1.8"/><rect x="1165.8999999999999" y="270.90000000000003" width="1.8" height="1.8"/><rect x="1161.6" y="274.90000000000003" width="1.8" height="1.8"/><rect x="1165.8999999999999" y="274.90000000000003" width="1.8" height="1.8"/><rect x="1160.9" y="264" width="11" height="2.2"/></g><path d="M1156.8 316.8 L1163.6 323.6 L1175.4 311.2" fill="none" stroke="#c8cdd6" stroke-width="2.6"/><rect x="1139.4" y="157.5" width="33" height="35" fill="none" stroke="#fb3535" stroke-width="3"/><path d="M1148.6 171.9 H1156.9 L1152.8 177.1 Z" fill="#1c2a46"/><circle cx="1205" cy="168" r="20" fill="#fb3636"/><rect x="1150.5" y="431.5" width="231.5" height="41.5" fill="none" stroke="#fb3535" stroke-width="2.7"/><circle cx="1414.8" cy="450.7" r="20" fill="#fb3636"/><path d="M802.6 1097.4 L809.6 1103.2 L819 1092.5" fill="none" stroke="#fff" stroke-width="2.6"/><circle cx="965" cy="1097" r="10.3" fill="none" stroke="#1c2a46" stroke-width="1.5"/><circle cx="965" cy="1091.8" r="1.2" fill="#1c2a46"/><rect x="964.1" y="1095.6" width="1.8" height="8" fill="#1c2a46"/></svg>
<svg style="left:0;top:0" width="2451" height="1127" viewBox="0 0 2451 1127"><path d="M1204 156.3 H1207 V175.3 H1204 V160.6 L1199.8 163.4 V160.3 Z" fill="#fff"/></svg><div class="t" style="left:1404.8px;top:433.6px;width:20px;text-align:center;color:#fff;font-size:26.5px;line-height:30px">2</div>
</body></html>
